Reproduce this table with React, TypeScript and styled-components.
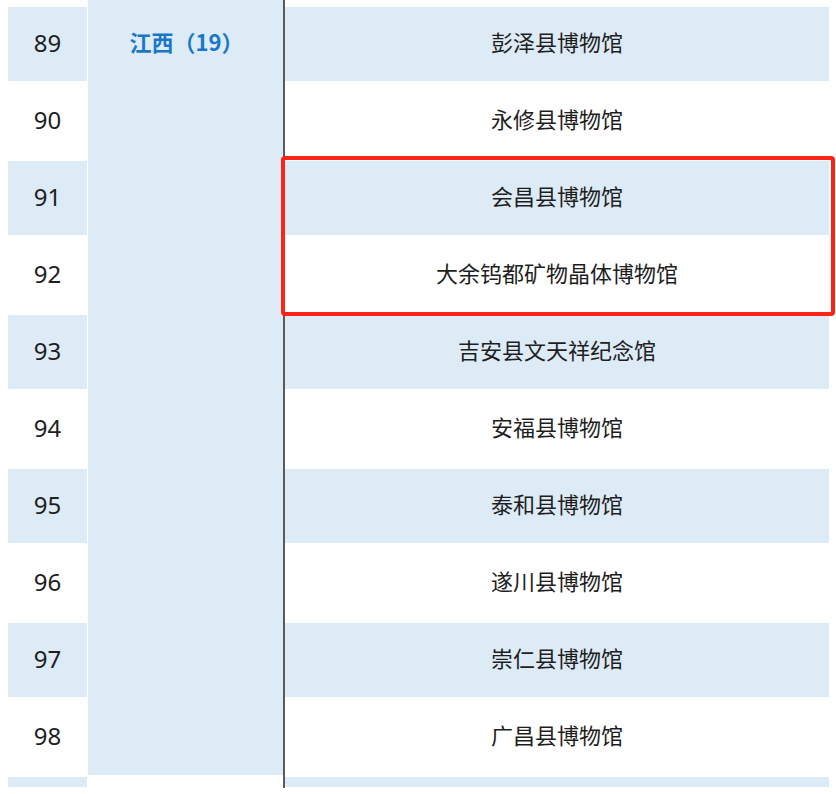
import React from "react";
import styled, { createGlobalStyle } from "styled-components";

const GlobalStyle = createGlobalStyle`
  html, body {
    margin: 0;
    padding: 0;
    background: #ffffff;
    overflow: hidden;
  }
  body {
    font-family: "Noto Sans", "Noto Sans CJK SC", sans-serif;
    color: #1e1e1e;
  }
`;

const BLUE = "#ddebf7";

const Page = styled.div`
  position: relative;
  width: 836px;
  height: 794px;
  padding-left: 8px;
  box-sizing: border-box;
`;

const Table = styled.div`
  display: grid;
  grid-template-columns: 79px 196px 2px 544px;
  grid-template-rows: 5px repeat(10, 77px) 13px;
  width: 821px;
`;

const Cell = styled.div<{ $col: number; $tone: string }>`
  grid-column: ${(p) => p.$col};
  background: ${(p) => p.$tone};
  border-top: 2px solid #ffffff;
  border-bottom: 1px solid #ffffff;
  box-sizing: border-box;
  display: flex;
  align-items: center;
  justify-content: center;
  overflow: hidden;
`;

const NumText = styled.span`
  font-family: "Noto Sans", "Noto Sans CJK SC", sans-serif;
  font-size: 24px;
  color: #1e1e1e;
  transform: translateY(-2px);
`;

const NameText = styled.span`
  font-family: "Noto Sans CJK SC", "Noto Sans", sans-serif;
  font-size: 22px;
  color: #1e1e1e;
  transform: translateY(-3px);
`;

const ProvinceCell = styled.div`
  grid-column: 2;
  grid-row: 1 / span 11;
  background: ${BLUE};
  border-left: 1px solid #ffffff;
  box-sizing: border-box;
`;

const ProvinceLabel = styled.div`
  margin-top: 2px;
  height: 77px;
  display: flex;
  align-items: center;
  justify-content: center;
  padding-left: 2px;
  font-family: "Noto Sans CJK SC", "Noto Sans", sans-serif;
  font-size: 22px;
  font-weight: 700;
  color: #1877c6;
`;

const NextProvinceCell = styled.div`
  grid-column: 2;
  grid-row: 12;
  background: #ffffff;
`;

const Divider = styled.div`
  grid-column: 3;
  grid-row: 1 / -1;
  background: #5a5a5a;
`;

const Highlight = styled.div`
  position: absolute;
  left: 281px;
  top: 156px;
  width: 554px;
  height: 160px;
  box-sizing: border-box;
  border: 4px solid #ff2219;
  border-radius: 4px;
  pointer-events: none;
`;

const rows: { no: string; name: string }[] = [
  { no: "", name: "" },
  { no: "89", name: "彭泽县博物馆" },
  { no: "90", name: "永修县博物馆" },
  { no: "91", name: "会昌县博物馆" },
  { no: "92", name: "大余钨都矿物晶体博物馆" },
  { no: "93", name: "吉安县文天祥纪念馆" },
  { no: "94", name: "安福县博物馆" },
  { no: "95", name: "泰和县博物馆" },
  { no: "96", name: "遂川县博物馆" },
  { no: "97", name: "崇仁县博物馆" },
  { no: "98", name: "广昌县博物馆" },
  { no: "", name: "" },
];

export default function App() {
  return (
    <Page>
      <GlobalStyle />
      <Table>
        <ProvinceCell>
          <ProvinceLabel>江西（19）</ProvinceLabel>
        </ProvinceCell>
        <NextProvinceCell />
        <Divider />
        {rows.map((r, i) => {
          const tone = i % 2 === 1 ? BLUE : "#ffffff";
          return (
            <React.Fragment key={i}>
              <Cell $col={1} $tone={tone} style={{ gridRow: i + 1 }}>
                {r.no && <NumText>{r.no}</NumText>}
              </Cell>
              <Cell $col={4} $tone={tone} style={{ gridRow: i + 1 }}>
                {r.name && <NameText>{r.name}</NameText>}
              </Cell>
            </React.Fragment>
          );
        })}
      </Table>
      <Highlight />
    </Page>
  );
}
